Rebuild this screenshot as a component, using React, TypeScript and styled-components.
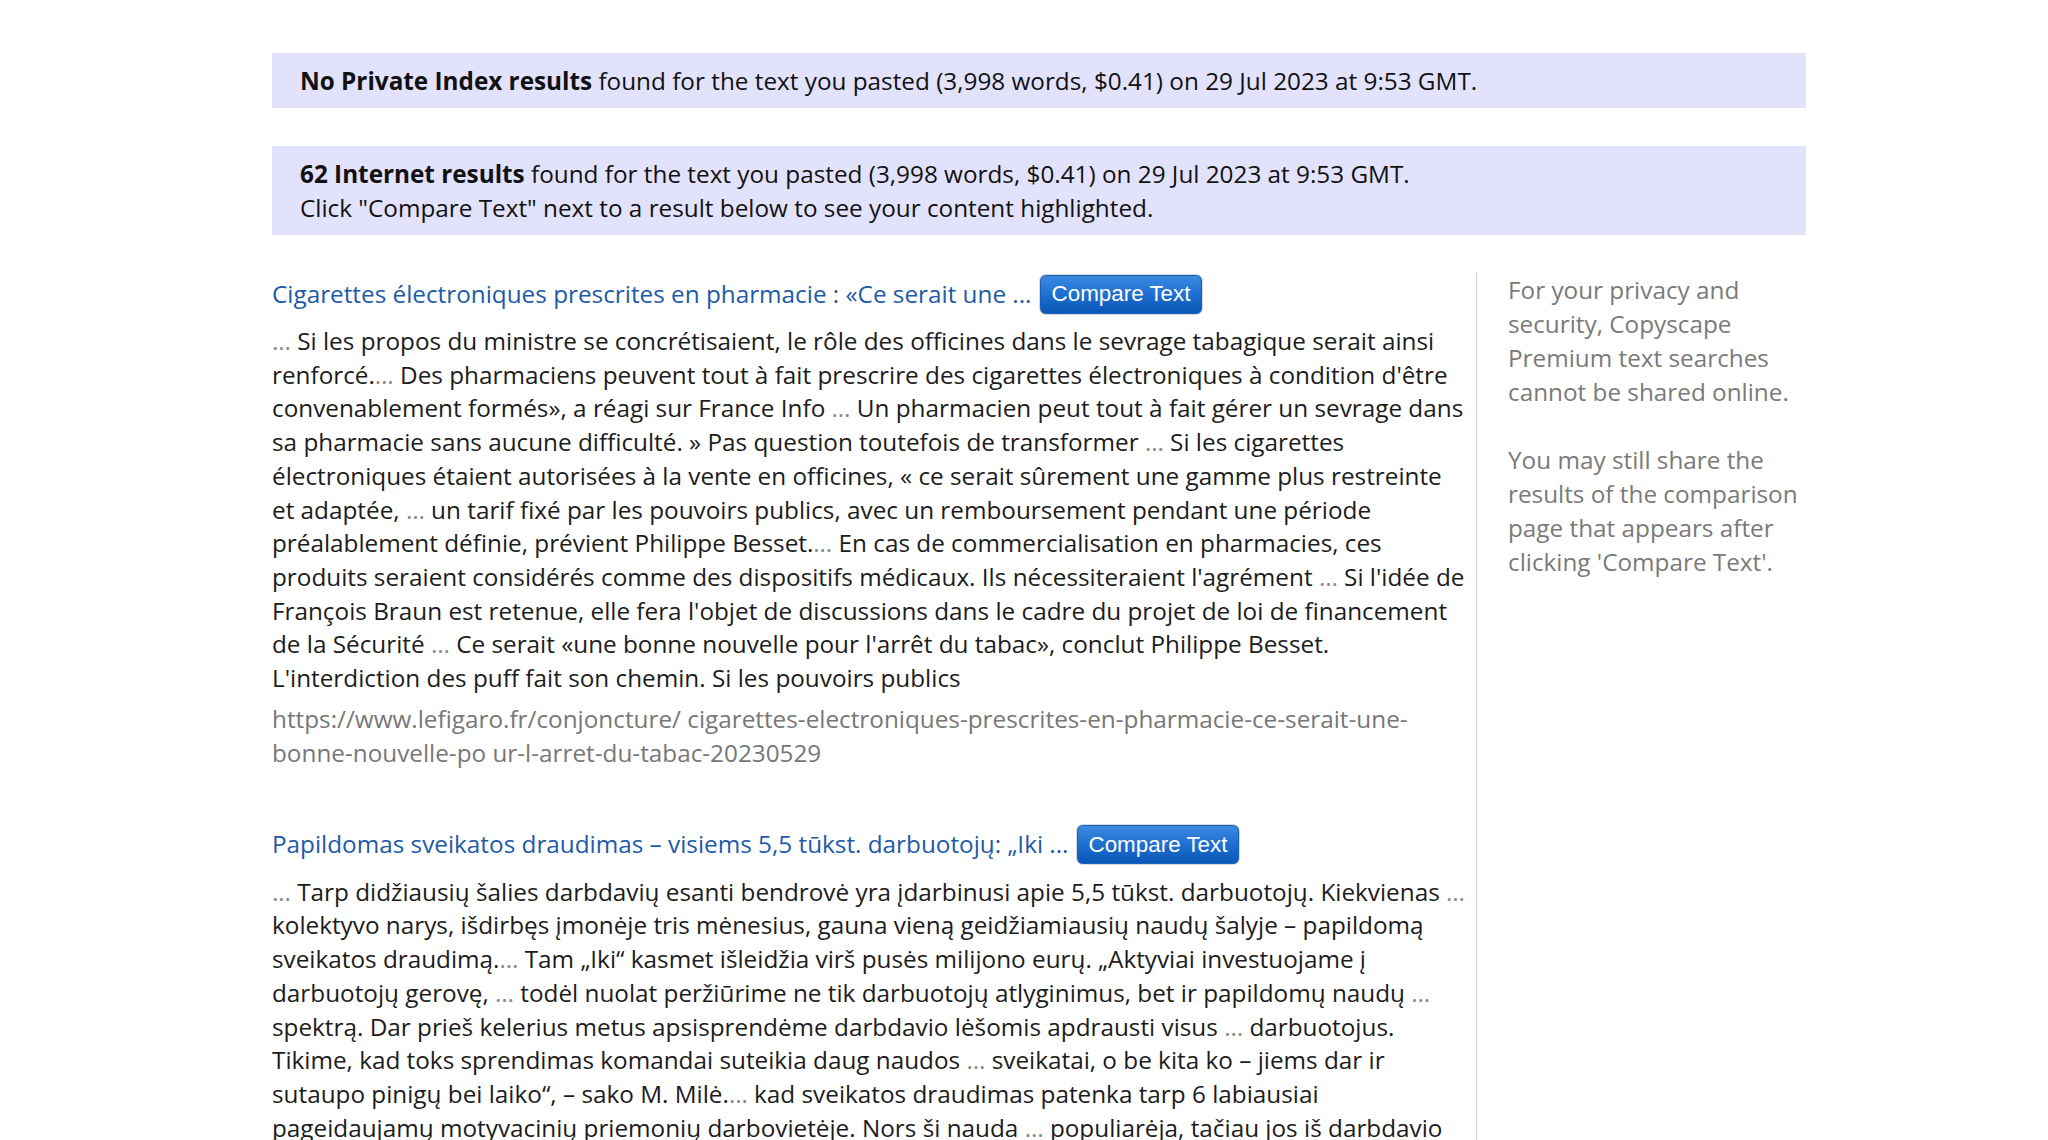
import React from "react";
import styled, { createGlobalStyle } from "styled-components";

const GlobalStyle = createGlobalStyle`
  html, body {
    margin: 0;
    padding: 0;
    background: #ffffff;
  }
  body {
    font-family: "Open Sans", "Noto Sans", sans-serif;
    color: #1c1c1c;
  }
`;

type Result = {
  title: string;
  lines: string[];
  url?: string[];
};

const results: Result[] = [
  {
    title: "Cigarettes électroniques prescrites en pharmacie : «Ce serait une ...",
    lines: [
      "… Si les propos du ministre se concrétisaient, le rôle des officines dans le sevrage tabagique serait ainsi",
      "renforcé.… Des pharmaciens peuvent tout à fait prescrire des cigarettes électroniques à condition d'être",
      "convenablement formés», a réagi sur France Info … Un pharmacien peut tout à fait gérer un sevrage dans",
      "sa pharmacie sans aucune difficulté. » Pas question toutefois de transformer … Si les cigarettes",
      "électroniques étaient autorisées à la vente en officines, « ce serait sûrement une gamme plus restreinte",
      "et adaptée, … un tarif fixé par les pouvoirs publics, avec un remboursement pendant une période",
      "préalablement définie, prévient Philippe Besset.… En cas de commercialisation en pharmacies, ces",
      "produits seraient considérés comme des dispositifs médicaux. Ils nécessiteraient l'agrément … Si l'idée de",
      "François Braun est retenue, elle fera l'objet de discussions dans le cadre du projet de loi de financement",
      "de la Sécurité … Ce serait «une bonne nouvelle pour l'arrêt du tabac», conclut Philippe Besset.",
      "L'interdiction des puff fait son chemin. Si les pouvoirs publics",
    ],
    url: [
      "https://www.lefigaro.fr/conjoncture/ cigarettes-electroniques-prescrites-en-pharmacie-ce-serait-une-",
      "bonne-nouvelle-po ur-l-arret-du-tabac-20230529",
    ],
  },
  {
    title: "Papildomas sveikatos draudimas – visiems 5,5 tūkst. darbuotojų: „Iki ...",
    lines: [
      "… Tarp didžiausių šalies darbdavių esanti bendrovė yra įdarbinusi apie 5,5 tūkst. darbuotojų. Kiekvienas …",
      "kolektyvo narys, išdirbęs įmonėje tris mėnesius, gauna vieną geidžiamiausių naudų šalyje – papildomą",
      "sveikatos draudimą.… Tam „Iki“ kasmet išleidžia virš pusės milijono eurų. „Aktyviai investuojame į",
      "darbuotojų gerovę, … todėl nuolat peržiūrime ne tik darbuotojų atlyginimus, bet ir papildomų naudų …",
      "spektrą. Dar prieš kelerius metus apsisprendėme darbdavio lėšomis apdrausti visus … darbuotojus.",
      "Tikime, kad toks sprendimas komandai suteikia daug naudos … sveikatai, o be kita ko – jiems dar ir",
      "sutaupo pinigų bei laiko“, – sako M. Milė.… kad sveikatos draudimas patenka tarp 6 labiausiai",
      "pageidaujamų motyvacinių priemonių darbovietėje. Nors ši nauda … populiarėja, tačiau jos iš darbdavio",
      "vis dar nesulaukia didelė dalis darbuotojų … Papildomas sveikatos draudimas",
    ],
  },
];

// grey ellipses inside the snippet text
function withEllipses(line: string) {
  const parts = line.split("…");
  return parts.map((p, i) => (
    <React.Fragment key={i}>
      {p}
      {i < parts.length - 1 && <Dots>…</Dots>}
    </React.Fragment>
  ));
}

export default function App() {
  return (
    <>
      <GlobalStyle />
      <Page>
        <Notice>
          <b>No Private Index results</b> found for the text you pasted (3,998 words, $0.41) on 29 Jul
          2023 at 9:53 GMT.
        </Notice>
        <Notice>
          <b>62 Internet results</b> found for the text you pasted (3,998 words, $0.41) on 29 Jul 2023 at
          9:53 GMT.
          <br />
          Click "Compare Text" next to a result below to see your content highlighted.
        </Notice>
        <Columns>
          <Main>
            {results.map((r, i) => (
              <ResultBlock key={i}>
                <TitleRow>
                  <TitleLink href="#">{r.title}</TitleLink>
                  <CompareButton>Compare Text</CompareButton>
                </TitleRow>
                <Snippet>
                  {r.lines.map((l, j) => (
                    <React.Fragment key={j}>
                      {withEllipses(l)}
                      {j < r.lines.length - 1 && <br />}
                    </React.Fragment>
                  ))}
                </Snippet>
                {r.url && (
                  <Url>
                    {r.url[0]}
                    <br />
                    {r.url[1]}
                  </Url>
                )}
              </ResultBlock>
            ))}
          </Main>
          <Sidebar>
            <SideText>
              For your privacy and security, Copyscape Premium text searches cannot be shared online.
            </SideText>
            <SideText>
              You may still share the results of the comparison page that appears after clicking
              'Compare Text'.
            </SideText>
          </Sidebar>
        </Columns>
      </Page>
    </>
  );
}

const Page = styled.div`
  width: 1534px;
  padding: 53px 0 0 272px;
  box-sizing: content-box;
`;

const Notice = styled.div`
  background: #e2e2fc;
  padding: 11px 28px 10px;
  font-size: 24.3px;
  line-height: 34px;
  color: #111;
  margin-bottom: 38px;
  b {
    font-weight: 700;
  }
`;

const Columns = styled.div`
  display: grid;
  grid-template-columns: 1204px 1fr;
  margin-top: -1px;
`;

const Main = styled.div`
  padding-right: 6px;
  display: flex;
  flex-direction: column;
  gap: 53px;
`;

const ResultBlock = styled.div`
  display: flex;
  flex-direction: column;
`;

const TitleRow = styled.div`
  display: flex;
  align-items: center;
  gap: 7px;
  height: 44px;
`;

const TitleLink = styled.a`
  color: #1d5aa9;
  text-decoration: none;
  font-size: 24.3px;
  line-height: 34px;
  white-space: nowrap;
  margin-top: -1px;
`;

const CompareButton = styled.button`
  font-family: "Liberation Sans", Arial, sans-serif;
  font-size: 22.4px;
  color: #ffffff;
  height: 41px;
  padding: 0 12px;
  border: 1px solid #d6d9df;
  border-radius: 7px;
  background: linear-gradient(to bottom, #3d8ae2 0%, #1e6fd0 50%, #0856b6 100%);
  box-shadow: inset 0 0 0 1px #1a5fb8;
  cursor: pointer;
`;

const Snippet = styled.p`
  margin: 8px 0 0;
  font-size: 24.3px;
  line-height: 33.7px;
  color: #1c1c1c;
  white-space: nowrap;
`;

const Dots = styled.span`
  color: #8a8a8a;
`;

const Url = styled.div`
  margin-top: 7px;
  font-size: 24.3px;
  line-height: 34px;
  color: #777777;
  white-space: nowrap;
`;

const Sidebar = styled.div`
  border-left: 1px solid #cfcff8;
  padding-left: 31px;
  padding-top: 1px;
  min-height: 900px;
`;

const SideText = styled.p`
  margin: 0 0 34px;
  font-size: 24.3px;
  line-height: 34px;
  color: #7a7a7a;
`;
